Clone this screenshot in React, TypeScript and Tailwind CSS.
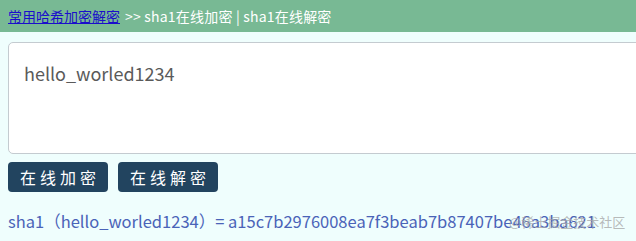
import React from 'react'

export default function App() {
  return (
    <div
      className="w-[636px] h-[241px] overflow-hidden bg-[#effefd] text-[14px]"
      style={{ fontFamily: '"Noto Sans CJK SC", "Noto Sans", sans-serif' }}
    >
      <div className="h-[32px] bg-[#78b994] flex items-center pl-[8px] text-white text-[14px] leading-none whitespace-nowrap">
        <a href="#" className="text-[#1a0dcc] underline">
          常用哈希加密解密
        </a>
        <span className="ml-[5px] tracking-[0.2px]">&gt;&gt; sha1在线加密 | sha1在线解密</span>
      </div>

      <div className="pl-[8px] pt-[10px]">
        <div className="h-[112px] w-[640px] bg-white border border-[#c4cbd0] rounded-[5px] px-[15px] pt-[18px] text-[18px] text-[#5a5a5a] leading-[24px]">
          hello_worled1234
        </div>
      </div>

      <div className="flex gap-[10px] pl-[8px] pt-[8px]">
        <button className="w-[100px] h-[30px] rounded-[4px] bg-[#22445f] text-white text-[16px] tracking-[4px] pl-[4px] leading-none">
          在线加密
        </button>
        <button className="w-[100px] h-[30px] rounded-[4px] bg-[#22445f] text-white text-[16px] tracking-[4px] pl-[4px] leading-none">
          在线解密
        </button>
      </div>

      <div className="relative pl-[8px] pt-[18px] text-[16.5px] leading-[22px] text-[#4a63b8] whitespace-nowrap">
        sha1（hello_worled1234）= a15c7b2976008ea7f3beab7b87407be46a3ba621
        <span className="absolute left-[509px] top-[19px] text-[13px] text-[#a8a8a8]/80">
          @稀土掘金技术社区
        </span>
      </div>
    </div>
  )
}
